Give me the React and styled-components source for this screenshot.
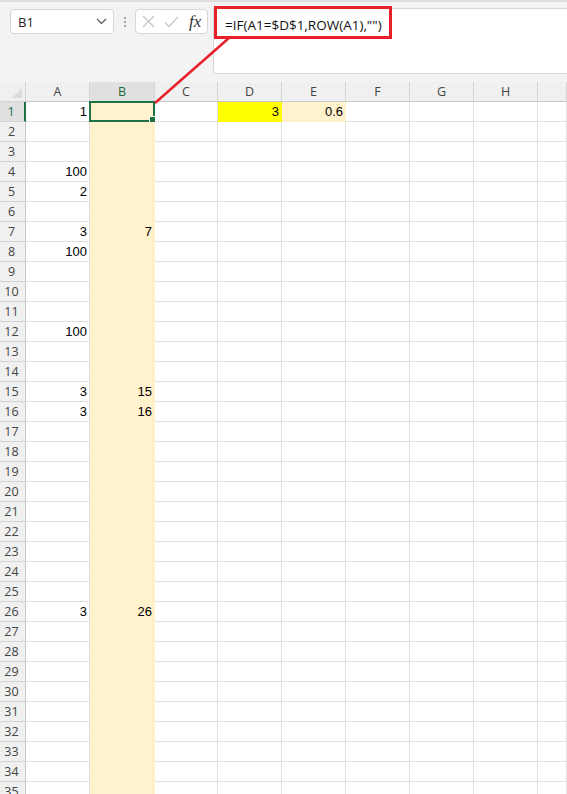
import React from 'react';
import styled, { createGlobalStyle } from 'styled-components';

const GlobalStyle = createGlobalStyle`
  html, body {
    margin: 0;
    padding: 0;
    height: 100%;
    overflow: hidden;
    background: #f3f3f3;
  }
  * { box-sizing: border-box; }
`;

const Page = styled.div`
  position: relative;
  width: 567px;
  height: 794px;
  overflow: hidden;
  background: #f3f3f3;
  font-family: 'Open Sans', 'Noto Sans', sans-serif;
`;

const TopStrip = styled.div`
  height: 2px;
  background: #dedede;
`;

const Toolbar = styled.div`
  display: flex;
  align-items: flex-start;
  height: 80px;
  padding: 6px 0 0 10px;
`;

const NameBox = styled.div`
  display: flex;
  align-items: center;
  justify-content: space-between;
  width: 104px;
  height: 25px;
  margin-top: 1px;
  padding: 0 6px 0 7px;
  background: #fff;
  border: 1px solid #d6d6d6;
  border-radius: 4px;
  font-size: 13px;
  color: #222;
`;

const Dots = styled.div`
  width: 21px;
  height: 25px;
  margin-top: 1px;
  display: flex;
  flex-direction: column;
  align-items: center;
  justify-content: center;
  gap: 2px;
  span {
    width: 2px;
    height: 2px;
    background: #8a8a8a;
    border-radius: 1px;
  }
`;

const FuncBox = styled.div`
  display: flex;
  align-items: center;
  gap: 9px;
  width: 73px;
  height: 25px;
  margin-top: 1px;
  padding: 0 5px 0 6px;
  background: #fff;
  border: 1px solid #d6d6d6;
  border-radius: 4px;
`;

const Fx = styled.span`
  font-family: 'Liberation Serif', 'DejaVu Serif', serif;
  font-style: italic;
  font-size: 17px;
  color: #333;
  margin-left: 1px;
`;

const FormulaBar = styled.div`
  position: relative;
  flex: 1;
  height: 66px;
  margin-left: 5px;
  background: #fff;
  border: 1px solid #d6d6d6;
  border-right: none;
  border-radius: 0 0 0 5px;
  padding: 7px 0 0 11px;
  font-size: 13.5px;
  color: #111;
`;

const Highlight = styled.div`
  position: absolute;
  left: 0;
  top: -3px;
  width: 178px;
  height: 33px;
  border: 3px solid #e8202a;
`;

const Sheet = styled.div`
  display: flex;
  flex-direction: column;
`;

const Row = styled.div`
  display: flex;
  height: 20px;
`;

const Corner = styled.div`
  position: relative;
  width: 26px;
  height: 20px;
  background: #f0f0f0;
  border-right: 1px solid #d4d4d4;
  border-bottom: 1px solid #d4d4d4;
  &::after {
    content: '';
    position: absolute;
    right: 3px;
    bottom: 3px;
    border-left: 10px solid transparent;
    border-bottom: 10px solid #dcdcdc;
  }
`;

const ColHeader = styled.div`
  width: ${(p) => p.w}px;
  flex: ${(p) => (p.last ? 1 : 'none')};
  height: 20px;
  display: flex;
  align-items: center;
  justify-content: center;
  font-size: 12.5px;
  color: ${(p) => (p.active ? '#1d6b3f' : '#444')};
  background: ${(p) => (p.active ? '#e0e0e0' : '#f0f0f0')};
  border-right: 1px solid #d4d4d4;
  border-bottom: 1px solid ${(p) => (p.active ? '#1e7145' : '#c8c8c8')};
`;

const RowHeader = styled.div`
  width: 26px;
  height: 20px;
  display: flex;
  align-items: center;
  justify-content: center;
  font-size: 12.5px;
  padding-right: 2px;
  color: ${(p) => (p.active ? '#1d6b3f' : '#444')};
  background: ${(p) => (p.active ? '#e0e0e0' : '#f0f0f0')};
  border-right: ${(p) => (p.active ? '2px solid #1e7145' : '1px solid #c8c8c8')};
  border-bottom: 1px solid #d4d4d4;
`;

const Cell = styled.div`
  position: relative;
  width: ${(p) => p.w}px;
  flex: ${(p) => (p.last ? 1 : 'none')};
  height: 20px;
  display: flex;
  align-items: center;
  justify-content: flex-end;
  padding-right: 2px;
  font-family: 'Liberation Sans', Arial, sans-serif;
  font-size: 13px;
  color: #000;
  background: ${(p) => p.fill || '#fff'};
  border-right: 1px solid ${(p) => (p.fill ? p.fill : '#e1e1e1')};
  border-bottom: 1px solid ${(p) => (p.fill ? p.fill : '#e1e1e1')};
`;

const Selection = styled.div`
  position: absolute;
  left: -1px;
  top: -1px;
  right: -1px;
  bottom: -1px;
  border: 2px solid #1e7145;
  pointer-events: none;
  &::after {
    content: '';
    position: absolute;
    right: -4px;
    bottom: -4px;
    width: 6px;
    height: 6px;
    background: #1e7145;
    border: 1px solid #fff;
  }
`;

const Overlay = styled.svg`
  position: absolute;
  left: 0;
  top: 0;
  pointer-events: none;
`;

const COLS = ['A', 'B', 'C', 'D', 'E', 'F', 'G', 'H', 'I'];
const WIDTHS = [64, 65, 63, 64, 64, 64, 64, 64, 64];

const DATA = {
  1: { A: 1, D: 3, E: 0.6 },
  4: { A: 100 },
  5: { A: 2 },
  7: { A: 3, B: 7 },
  8: { A: 100 },
  12: { A: 100 },
  15: { A: 3, B: 15 },
  16: { A: 3, B: 16 },
  26: { A: 3, B: 26 },
};

const fillFor = (row, col) => {
  if (col === 'B') return '#fff2cc';
  if (row === 1 && col === 'D') return '#ffff00';
  if (row === 1 && col === 'E') return '#fff2cc';
  return null;
};

const App = () => {
  const rows = Array.from({ length: 35 }, (_, i) => i + 1);
  return (
    <>
      <GlobalStyle />
      <Page>
        <TopStrip />
        <Toolbar>
          <NameBox>
            <span>B1</span>
            <svg width="11" height="7" viewBox="0 0 11 7">
              <path d="M1 1l4.5 4.5L10 1" fill="none" stroke="#555" strokeWidth="1.2" />
            </svg>
          </NameBox>
          <Dots>
            <span />
            <span />
            <span />
          </Dots>
          <FuncBox>
            <svg width="13" height="13" viewBox="0 0 13 13">
              <path d="M1 1l11 11M12 1L1 12" stroke="#c4c4c4" strokeWidth="1.2" />
            </svg>
            <svg width="15" height="12" viewBox="0 0 15 12">
              <path d="M1 6.5l4 4L14 1" fill="none" stroke="#c4c4c4" strokeWidth="1.2" />
            </svg>
            <Fx>fx</Fx>
          </FuncBox>
          <FormulaBar>
            =IF(A1=$D$1,ROW(A1),"")
            <Highlight />
          </FormulaBar>
        </Toolbar>
        <Sheet>
          <Row>
            <Corner />
            {COLS.map((c, i) => (
              <ColHeader key={c} w={WIDTHS[i]} last={i === COLS.length - 1} active={c === 'B'}>
                {c === 'I' ? '' : c}
              </ColHeader>
            ))}
          </Row>
          {rows.map((r) => (
            <Row key={r}>
              <RowHeader active={r === 1}>{r}</RowHeader>
              {COLS.map((c, i) => (
                <Cell key={c} w={WIDTHS[i]} last={i === COLS.length - 1} fill={fillFor(r, c)}>
                  {DATA[r] && DATA[r][c] !== undefined ? DATA[r][c] : ''}
                  {r === 1 && c === 'B' && <Selection />}
                </Cell>
              ))}
            </Row>
          ))}
        </Sheet>
        <Overlay width="567" height="794">
          <line x1="229" y1="38" x2="155" y2="103" stroke="#e8202a" strokeWidth="2.5" />
        </Overlay>
      </Page>
    </>
  );
};

export default App;
